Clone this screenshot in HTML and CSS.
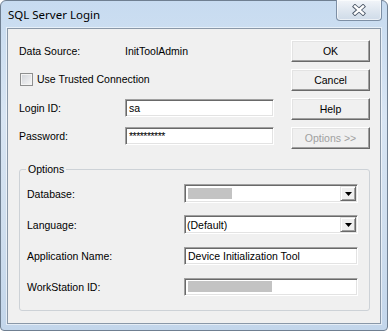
FILE: index.html
```html
<!DOCTYPE html>
<html lang="en">
<head>
    <meta charset="UTF-8">
    <title>SQL Server Login</title>
    <link rel="stylesheet" href="styles.css">
</head>
<body>
    <div class="window">
        <div class="titlebar">
            <span class="title">SQL Server Login</span>
            <button class="close">
                <svg width="14" height="12" viewBox="0 0 14 12">
                    <path d="M3 2.5 L11 9.5 M11 2.5 L3 9.5" stroke="#4b5767" stroke-width="4.2" stroke-linecap="square"/>
                    <path d="M3 2.5 L11 9.5 M11 2.5 L3 9.5" stroke="#fff" stroke-width="2.4" stroke-linecap="square"/>
                </svg>
            </button>
        </div>

        <div class="client">
            <!-- Login fields + buttons -->
            <div class="top">
                <div class="fields">
                    <span>Data Source:</span>
                    <span class="value">InitToolAdmin</span>
                    <label class="check"><span class="box"></span>Use Trusted Connection</label>
                    <span>Login ID:</span>
                    <div class="edit">sa</div>
                    <span>Password:</span>
                    <div class="edit pwd">**********</div>
                </div>
                <div class="buttons">
                    <button class="btn">OK</button>
                    <button class="btn">Cancel</button>
                    <button class="btn">Help</button>
                    <button class="btn disabled">Options &gt;&gt;</button>
                </div>
            </div>

            <!-- Options group -->
            <fieldset class="options">
                <legend>Options</legend>
                <div class="opt-grid">
                    <span>Database:</span>
                    <div class="combo">
                        <div class="combo-val"><span class="blank short"></span></div>
                        <div class="combo-btn"><svg width="7" height="4" viewBox="0 0 7 4"><polygon points="0,0 7,0 3.5,4" fill="#000"/></svg></div>
                    </div>
                    <span>Language:</span>
                    <div class="combo">
                        <div class="combo-val">(Default)</div>
                        <div class="combo-btn"><svg width="7" height="4" viewBox="0 0 7 4"><polygon points="0,0 7,0 3.5,4" fill="#000"/></svg></div>
                    </div>
                    <span>Application Name:</span>
                    <div class="edit">Device Initialization Tool</div>
                    <span>WorkStation ID:</span>
                    <div class="edit"><span class="blank long"></span></div>
                </div>
            </fieldset>
        </div>
    </div>
</body>
</html>
```

FILE: styles.css
```css
body {
    margin: 0;
    background: #fff;
    font-family: "Liberation Sans", Arial, sans-serif;
    font-size: 10.5px;
    color: #000;
}
.window {
    width: 388px;
    height: 331px;
    box-sizing: border-box;
    display: flex;
    flex-direction: column;
    border: 1px solid #6f7f91;
    border-radius: 6px 6px 4px 4px;
    background: linear-gradient(180deg, #c7dbf0 0%, #d8e5f3 35%, #cfdeee 70%, #c3d6eb 100%);
}
.titlebar {
    height: 27px;
    display: flex;
    align-items: center;
}
.title {
    padding-left: 7px;
    font-family: "Noto Sans", sans-serif;
    font-size: 11.5px;
    color: #000;
}
.close {
    margin: -1px 5px 0 auto;
    align-self: flex-start;
    width: 46px;
    height: 21px;
    padding: 0;
    display: flex;
    align-items: center;
    justify-content: center;
    border: 1px solid #7d8fa5;
    border-top: none;
    border-radius: 0 0 4px 4px;
    background: linear-gradient(180deg, #f2f5f9 0%, #dfe7f0 50%, #cfdbe8 100%);
    box-shadow: inset 0 0 0 1px rgba(255, 255, 255, 0.6);
}
.client {
    flex: 1;
    margin: 0 6px 6px;
    padding: 11px 10px 0 11px;
    border: 1px solid #8a98a8;
    background: #f0f0f0;
    box-shadow: 0 0 0 1px rgba(255, 255, 255, 0.55);
}
.top {
    display: flex;
    justify-content: space-between;
}
.fields {
    display: grid;
    grid-template-columns: 106px 149px;
    grid-template-rows: 22px 34px 24px 32px;
    align-items: center;
}
.check {
    grid-column: 1 / 3;
    display: flex;
    align-items: center;
    margin-left: 1px;
}
.box {
    width: 11px;
    height: 11px;
    margin-right: 4px;
    border: 1px solid #8e8f8f;
    background: linear-gradient(135deg, #d0d3d8, #f7f7f7);
    box-shadow: inset 0 0 0 1px #f4f4f4;
}
.buttons {
    display: flex;
    flex-direction: column;
    gap: 7px;
}
.btn {
    width: 79px;
    height: 22px;
    padding: 0;
    font-family: inherit;
    font-size: 10.5px;
    color: #000;
    background: #f0f0f0;
    border: 1px solid;
    border-color: #fff #696969 #696969 #fff;
    box-shadow: inset -1px -1px 0 #a0a0a0, inset 1px 1px 0 #e3e3e3;
}
.btn.disabled {
    color: #a0a0a0;
}
.edit {
    height: 18px;
    box-sizing: border-box;
    padding: 0 3px;
    display: flex;
    align-items: center;
    background: #fff;
    border: 1px solid;
    border-color: #a0a0a0 #fff #fff #a0a0a0;
    box-shadow: inset 1px 1px 0 #696969, inset -1px -1px 0 #e3e3e3;
    white-space: nowrap;
}
.pwd {
    font-size: 10.5px;
    letter-spacing: -0.5px;
}
/* Options group */
.options {
    margin: 11px 0 0;
    padding: 2px 10px 8px 7px;
    min-width: 0;
    border: 1px solid #cdd2d7;
    border-radius: 3px;
}
.options legend {
    margin-left: -1px;
    padding: 0 2px;
    line-height: 13px;
}
.opt-grid {
    display: grid;
    grid-template-columns: 157px 174px;
    grid-auto-rows: 31px;
    align-items: center;
}
.combo {
    height: 19px;
    box-sizing: border-box;
    display: flex;
    background: #fff;
    border: 1px solid;
    border-color: #a0a0a0 #fff #fff #a0a0a0;
    box-shadow: inset 1px 1px 0 #696969, inset -1px -1px 0 #e3e3e3;
}
.combo-val {
    flex: 1;
    display: flex;
    align-items: center;
    padding-left: 2px;
}
.combo-btn {
    width: 16px;
    margin: 1px;
    box-sizing: border-box;
    display: flex;
    align-items: center;
    justify-content: center;
    background: #f0f0f0;
    border: 1px solid;
    border-color: #e3e3e3 #696969 #696969 #e3e3e3;
    box-shadow: inset 1px 1px 0 #fff, inset -1px -1px 0 #a0a0a0;
}
.blank {
    display: inline-block;
    height: 11px;
    background: #c3c3c3;
}
.blank.short {
    width: 44px;
    margin-left: 1px;
}
.blank.long {
    width: 84px;
}
```
